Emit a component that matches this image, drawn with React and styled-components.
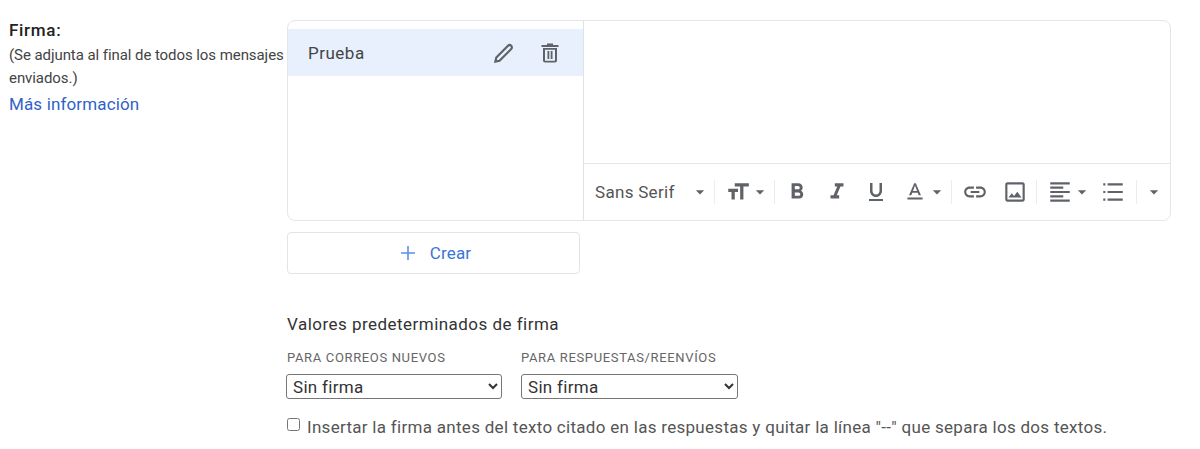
import React from 'react';
import styled, { createGlobalStyle } from 'styled-components';

const Global = createGlobalStyle`
  html, body {
    margin: 0;
    padding: 0;
    background: #fff;
    font-family: Roboto, "Liberation Sans", Arial, sans-serif;
  }
`;

const Page = styled.div`
  width: 1200px;
  height: 449px;
  display: flex;
  box-sizing: border-box;
  padding: 20px 29px 0 9px;
  overflow: hidden;
`;

const Aside = styled.div`
  width: 278px;
  flex: none;
`;

const Title = styled.div`
  font-size: 17px;
  line-height: 20px;
  font-weight: 500;
  letter-spacing: 0.7px;
  color: #222;
`;

const Note = styled.div`
  font-size: 15px;
  line-height: 23px;
  margin-top: 4px;
  color: #444;
  white-space: nowrap;
  letter-spacing: -0.07px;
`;

const HelpLink = styled.a`
  display: block;
  font-size: 17px;
  line-height: 22px;
  margin-top: 3px;
  letter-spacing: 0.14px;
  color: #2f62c8;
`;

const Main = styled.div`
  flex: 1;
  min-width: 0;
`;

const Panel = styled.div`
  display: flex;
  height: 201px;
  box-sizing: border-box;
  border: 1px solid #e4e6e8;
  border-radius: 8px;
`;

const List = styled.div`
  width: 295px;
  flex: none;
  padding-top: 8px;
  border-right: 1px solid #e0e2e4;
`;

const ListRow = styled.div`
  height: 47px;
  display: flex;
  align-items: center;
  padding: 0 21px 0 20px;
  background: #e7f0fc;
  color: #444;
  font-size: 17px;
  letter-spacing: 0.5px;
`;

const RowName = styled.span`
  flex: 1;
`;

const RowIcon = styled.svg`
  width: 24px;
  height: 24px;
  fill: #5f6368;
  margin-left: 22px;
`;

const PencilIcon = styled.svg`
  width: 24px;
  height: 24px;
  fill: none;
  stroke: #5f6368;
  stroke-width: 2.2;
`;

const Editor = styled.div`
  flex: 1;
  display: flex;
  flex-direction: column;
`;

const EditorBody = styled.div`
  flex: 1;
`;

const Toolbar = styled.div`
  height: 56px;
  display: flex;
  align-items: center;
  padding-left: 11px;
  border-top: 1px solid #e4e6e8;
`;

const Group = styled.div`
  width: ${p => p.$w}px;
  height: 24px;
  flex: none;
  display: flex;
  align-items: center;
  box-sizing: border-box;
  padding-left: ${p => p.$pad || 0}px;
  border-right: ${p => (p.$last ? 'none' : '1px solid #ebeced')};
`;

const FontName = styled.span`
  font-size: 17px;
  letter-spacing: 0.3px;
  color: #555;
  width: 95px;
  flex: none;
`;

const Tool = styled.svg`
  width: ${p => p.$size}px;
  height: ${p => p.$size}px;
  fill: #5f6368;
  flex: none;
  margin-right: ${p => p.$gap || 0}px;
`;

const CreateButton = styled.button`
  display: flex;
  align-items: center;
  justify-content: center;
  width: 293px;
  height: 42px;
  margin-top: 11px;
  padding: 0;
  background: #fff;
  border: 1px solid #e2e4e6;
  border-radius: 4px;
  color: #3a74d8;
  font-family: inherit;
  font-size: 17px;
  letter-spacing: 0.2px;
  gap: 10px;
`;

const PlusIcon = styled.svg`
  width: 24px;
  height: 24px;
  fill: #5a90e6;
`;

const Section = styled.div`
  margin-top: 40px;
`;

const SectionTitle = styled.div`
  font-size: 17px;
  line-height: 20px;
  color: #333;
  letter-spacing: 0.47px;
`;

const Defaults = styled.div`
  display: flex;
  gap: 19px;
  margin-top: 16px;
  margin-left: -1px;
`;

const Field = styled.div`
  display: flex;
  flex-direction: column;
  gap: 8px;
`;

const FieldLabel = styled.label`
  font-size: 13px;
  line-height: 16px;
  letter-spacing: 0.65px;
  color: #666;
  padding-left: ${p => p.$indent || 0}px;
`;

const Select = styled.select`
  width: ${p => p.$w}px;
  height: 25px;
  font-family: inherit;
  font-size: 17px;
  letter-spacing: 0.3px;
  color: #333;
  background: #fff;
  border: 1px solid #767676;
  border-radius: 3px;
  padding: 0 0 0 2px;
`;

const CheckRow = styled.label`
  display: flex;
  align-items: flex-start;
  margin-top: 16px;
  font-size: 17px;
  line-height: 24px;
  letter-spacing: 0.29px;
  color: #555;
  white-space: nowrap;
`;

const Check = styled.input`
  width: 13px;
  height: 13px;
  margin: 3px 7px 0 0;
  flex: none;
`;

const Caret = ({ gap }) => (
  <Tool viewBox="0 0 24 24" $size={20} $gap={gap}>
    <path d="M7 10l5 5 5-5z" />
  </Tool>
);

const Icon = ({ d, gap, size = 26 }) => (
  <Tool viewBox="0 0 24 24" $gap={gap} $size={size}>
    <path d={d} />
  </Tool>
);

const paths = {
  size: 'M9 4v3h5v12h3V7h5V4H9zm-6 8h3v7h3v-7h3V9H3v3z',
  bold: 'M15.6 10.79c.97-.67 1.65-1.77 1.65-2.79 0-2.26-1.75-4-4-4H7v14h7.04c2.09 0 3.71-1.7 3.71-3.79 0-1.52-.86-2.82-2.15-3.42zM10 6.5h3c.83 0 1.5.67 1.5 1.5s-.67 1.5-1.5 1.5h-3v-3zm3.5 9H10v-3h3.5c.83 0 1.5.67 1.5 1.5s-.67 1.5-1.5 1.5z',
  italic: 'M10 4v3h2.21l-3.42 8H6v3h8v-3h-2.21l3.42-8H18V4z',
  underline: 'M12 17c3.31 0 6-2.69 6-6V3h-2.5v8c0 1.93-1.57 3.5-3.5 3.5S8.5 12.93 8.5 11V3H6v8c0 3.31 2.69 6 6 6zm-7 2v2h14v-2H5z',
  color: 'M5 17v2h14v-2H5zm4.5-4.2h5l.9 2.2h2.1L12.75 4h-1.5L6.5 15h2.1l.9-2.2zM12 5.98L13.87 11h-3.74L12 5.98z',
  link: 'M3.9 12c0-1.71 1.39-3.1 3.1-3.1h4V7H7c-2.76 0-5 2.24-5 5s2.24 5 5 5h4v-1.9H7c-1.71 0-3.1-1.39-3.1-3.1zM8 13h8v-2H8v2zm9-6h-4v1.9h4c1.71 0 3.1 1.39 3.1 3.1s-1.39 3.1-3.1 3.1h-4V17h4c2.76 0 5-2.24 5-5s-2.24-5-5-5z',
  image: 'M19 5v14H5V5h14m0-2H5c-1.1 0-2 .9-2 2v14c0 1.1.9 2 2 2h14c1.1 0 2-.9 2-2V5c0-1.1-.9-2-2-2zM14.14 11.86l-3 3.87L9 13.14 6 17h12z',
  align: 'M15 15H3v2h12v-2zm0-8H3v2h12V7zM3 13h18v-2H3v2zm0 8h18v-2H3v2zM3 3v2h18V3H3z',
  list: 'M3 4h2v2H3zm0 7h2v2H3zm0 7h2v2H3zM7 4h14v2H7zm0 7h14v2H7zm0 7h14v2H7z',
};

const App = () => (
  <Page>
    <Global />
    <Aside>
      <Title>Firma:</Title>
      <Note>
        (Se adjunta al final de todos los mensajes
        <br />
        enviados.)
      </Note>
      <HelpLink>Más información</HelpLink>
    </Aside>
    <Main>
      <Panel>
        <List>
          <ListRow>
            <RowName>Prueba</RowName>
            <PencilIcon viewBox="0 0 24 24">
              <path d="M3.4 20.6l.9-4.1L16 4.8c.9-.9 2.3-.9 3.2 0s.9 2.3 0 3.2L7.5 19.7z" />
            </PencilIcon>
            <RowIcon viewBox="0 0 24 24">
              <path d="M9 2.5h6v1.5h5.5v2h-17V4H9z" />
              <path fillRule="evenodd" d="M5 7h14v12.5c0 1.1-.9 2-2 2H7c-1.1 0-2-.9-2-2zm2 1.8v10.9h10V8.800z" />
              <path d="M9.500 10h1.800v8H9.500zm3.200 0h1.800v8h-1.800z" />
            </RowIcon>
          </ListRow>
        </List>
        <Editor>
          <EditorBody />
          <Toolbar>
            <Group $w={120}>
              <FontName>Sans Serif</FontName>
              <Caret />
            </Group>
            <Group $w={60} $pad={10}>
              <Icon d={paths.size} gap={-1} />
              <Caret />
            </Group>
            <Group $w={177} $pad={9}>
              <Icon d={paths.bold} gap={14} />
              <Icon d={paths.italic} gap={14} />
              <Icon d={paths.underline} gap={14} size={24} />
              <Icon d={paths.color} gap={-1} />
              <Caret />
            </Group>
            <Group $w={85} $pad={10}>
              <Icon d={paths.link} gap={14} />
              <Icon d={paths.image} />
            </Group>
            <Group $w={100} $pad={10}>
              <Icon d={paths.align} gap={-1} />
              <Caret gap={8} />
              <Icon d={paths.list} />
            </Group>
            <Group $w={30} $pad={7} $last>
              <Caret />
            </Group>
          </Toolbar>
        </Editor>
      </Panel>
      <CreateButton>
        <PlusIcon viewBox="0 0 24 24">
          <path d="M19 12.800h-6.200V19h-1.600v-6.200H5v-1.600h6.200V5h1.600v6.200H19z" />
        </PlusIcon>
        Crear
      </CreateButton>
      <Section>
        <SectionTitle>Valores predeterminados de firma</SectionTitle>
        <Defaults>
          <Field>
            <FieldLabel $indent={1}>PARA CORREOS NUEVOS</FieldLabel>
            <Select $w={216}>
              <option>Sin firma</option>
            </Select>
          </Field>
          <Field>
            <FieldLabel>PARA RESPUESTAS/REENVÍOS</FieldLabel>
            <Select $w={217}>
              <option>Sin firma</option>
            </Select>
          </Field>
        </Defaults>
        <CheckRow>
          <Check type="checkbox" />
          Insertar la firma antes del texto citado en las respuestas y quitar la línea "--" que separa los dos textos.
        </CheckRow>
      </Section>
    </Main>
  </Page>
);

export default App;
